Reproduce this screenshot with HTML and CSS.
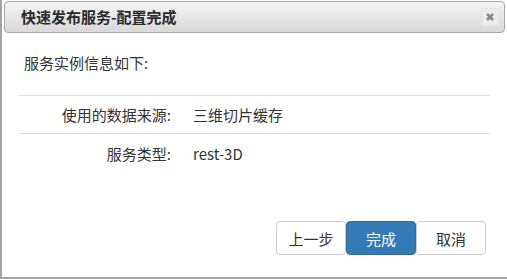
FILE: index.html
```html
<!DOCTYPE html>
<html lang="zh">
<head>
<meta charset="utf-8">
<title>快速发布服务-配置完成</title>
<link rel="stylesheet" href="styles.css">
</head>
<body>
<div class="dialog">
  <div class="header">
    <span class="title">快速发布服务-配置完成</span>
    <span class="close">
      <svg width="10" height="10" viewBox="0 0 10 10"><path d="M2 2 L8 8 M8 2 L2 8" stroke="#888" stroke-width="2.6" stroke-linecap="butt"/></svg>
    </span>
  </div>
  <div class="content">
    <div class="intro">服务实例信息如下:</div>
    <div class="divider"></div>
    <div class="row row1"><span class="label">使用的数据来源:</span><span class="value">三维切片缓存</span></div>
    <div class="divider"></div>
    <div class="row row2"><span class="label">服务类型:</span><span class="value">rest-3D</span></div>
    <div class="actions">
      <button class="btn">上一步</button>
      <button class="btn primary">完成</button>
      <button class="btn">取消</button>
    </div>
  </div>
</div>
</body>
</html>
```
FILE: styles.css
```css
html, body { margin: 0; padding: 0; background: #fff; overflow: hidden; }
body { font-family: "Noto Sans CJK SC", "Noto Sans", sans-serif; font-size: 15px; color: #333; }
.dialog {
  width: 507px; height: 279px; box-sizing: border-box;
  border-left: 2px solid #a3a3a3; border-bottom: 2px solid #a3a3a3;
  padding-top: 1px; display: flex; flex-direction: column;
}
.header {
  margin-left: 2px; width: 501px; height: 32px; box-sizing: border-box;
  border: 1px solid #a8a8a8; border-radius: 4px;
  background: linear-gradient(#f4f4f4, #d9d9d9);
  display: flex; align-items: center; justify-content: space-between;
  padding: 0 5px 0 16px;
}
.title { font-weight: bold; font-size: 15px; color: #2a2a2a; line-height: 20px; }
.close {
  width: 18px; height: 18px; box-sizing: border-box;
  background: #ececec; border: 1px solid #e2e2e2; border-radius: 2px;
  display: flex; align-items: center; justify-content: center;
}
.content { padding: 0 15px 0 17px; display: flex; flex-direction: column; }
.intro { margin-top: 20px; margin-left: 5px; line-height: 20px; }
.divider { height: 1px; background: #dedede; margin-top: 22px; width: 471px; }
.row1 + .divider { margin-top: 0; }
.row { display: flex; align-items: center; line-height: 20px; }
.row1 { height: 37px; }
.row2 { height: 40px; }
.label { width: 152px; text-align: right; }
.value { margin-left: 22px; }
.actions { display: flex; justify-content: flex-end; margin-top: 47px; padding-right: 6px; }
.btn {
  width: 70px; height: 34px; box-sizing: border-box;
  font-family: inherit; font-size: 15px; color: #333;
  background: #fff; border: 1px solid #ccc; border-radius: 4px; padding: 0;
}
.btn.primary { background: #337ab7; border-color: #2e6da4; color: #fff; }
```
